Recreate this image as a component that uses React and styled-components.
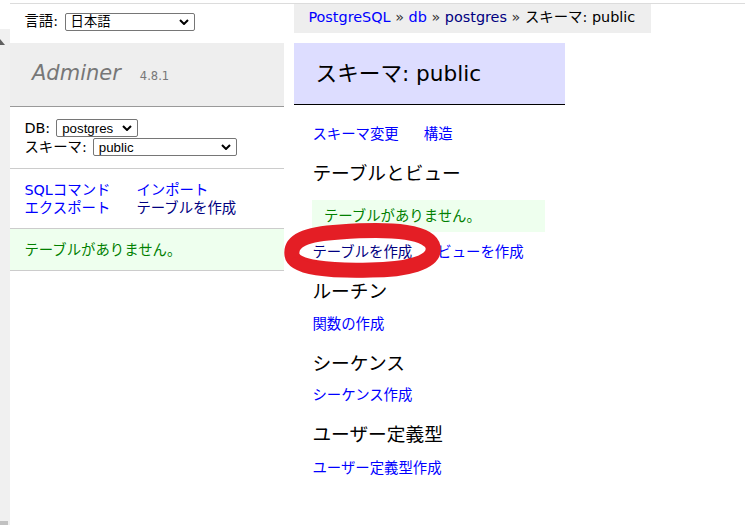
import React from 'react'
import styled, { createGlobalStyle } from 'styled-components'

const Global = createGlobalStyle`
    html, body {
        margin: 0;
        padding: 0;
        background: #fff;
    }
    body {
        font-family: 'DejaVu Sans', 'Noto Sans CJK JP', sans-serif;
        font-size: 14.4px;
        line-height: 18px;
        color: #000;
    }
`

const Shell = styled.div`
    display: flex;
    min-height: 100vh;
`

const Gutter = styled.div`
    width: 10px;
    flex: none;
    display: flex;
    flex-direction: column;
    padding-top: 29px;
`

const Track = styled.div`
    flex: 1;
    background: #f0f0f0;
    display: flex;
    flex-direction: column;
    justify-content: space-between;
    padding-top: 10px;
`

const Thumb = styled.div`
    width: 8px;
    height: 4px;
    background: #c1c1c1;
`

const Page = styled.div`
    flex: 1;
    position: relative;
    margin-top: 3px;
    border-top: 1px solid #dcdcdc;
    display: grid;
    grid-template-columns: 274px 271px;
    grid-template-rows: 29px auto;
    column-gap: 10px;
    row-gap: 10px;
    align-content: start;
`

const Lang = styled.div`
    padding: 4px 14.4px 0;
    line-height: 26px;
    white-space: nowrap;
`

const Breadcrumb = styled.p`
    margin: 0;
    justify-self: start;
    white-space: nowrap;
    background: #eee;
    height: 29px;
    line-height: 27px;
    padding: 0 16px 0 14.4px;
`

const Sep = styled.span`
    color: #333;
`

const Menu = styled.div`
    display: flex;
    flex-direction: column;
`

const Logo = styled.h1`
    margin: 0;
    background: #eee;
    border-bottom: 1px solid #999;
    padding: 16.5px 14px 16.5px 22px;
    font-size: 21px;
    line-height: 27px;
    font-weight: normal;
    color: #777;
`

const LogoName = styled.span`
    font-style: italic;
`

const Version = styled.span`
    font-size: 11.5px;
    margin-left: 19px;
`

const MenuBlock = styled.div`
    padding: 11.5px 14.4px;
    border-bottom: 1px solid #ccc;
    background: ${p => (p.$message ? '#efe' : 'transparent')};
    color: ${p => (p.$message ? 'green' : '#000')};
`

const FieldRow = styled.div`
    height: 19px;
    display: flex;
    align-items: center;
    white-space: nowrap;
    gap: 5px;
`

const MenuLinks = styled.div`
    display: grid;
    grid-template-columns: 112px auto;
`

const Link = styled.a`
    color: ${p => (p.$visited ? 'navy' : 'blue')};
    text-decoration: none;
    white-space: nowrap;
    cursor: pointer;
`

const SelectWrap = styled.span`
    position: relative;
    display: inline-flex;
    margin-left: ${p => p.$shift || 0}px;
`

const Select = styled.select`
    appearance: none;
    width: ${p => p.$w}px;
    height: 18px;
    margin: 0;
    border: 1px solid #767676;
    border-radius: 2px;
    background: #fff;
    color: #000;
    font-family: 'Liberation Sans', 'Noto Sans CJK JP', sans-serif;
    font-size: 13.3px;
    padding: 0 20px 0 5px;
`

const Chevron = styled.svg`
    position: absolute;
    right: 6px;
    top: 50%;
    margin-top: -3px;
    pointer-events: none;
`

const Content = styled.div`
    display: flex;
    flex-direction: column;
`

const Title = styled.h2`
    margin: 0;
    background: #ddf;
    border-bottom: 1px solid #000;
    padding: 17px 21.6px;
    font-size: 21.6px;
    line-height: 27px;
    font-weight: normal;
`

const Body = styled.div`
    padding-left: 18.4px;
`

const Links = styled.p`
    margin: ${p => p.$top}px 0 0;
    display: flex;
    gap: 25px;
    line-height: 18px;
`

const Heading = styled.h3`
    margin: ${p => p.$top || 19}px 0 0;
    font-size: 18.7px;
    line-height: 23px;
    font-weight: normal;
`

const Message = styled.div`
    margin: 15.5px 20px 0 0;
    padding: 7px 11.5px;
    background: #efe;
    color: green;
`

const Scribble = styled.svg`
    position: absolute;
    left: 270px;
    top: 216px;
    pointer-events: none;
`

function Dropdown({ width, value, shift }) {
    return (
        <SelectWrap $shift={shift}>
            <Select $w={width} defaultValue={value}>
                <option>{value}</option>
            </Select>
            <Chevron width="10" height="6" viewBox="0 0 10 6">
                <path d="M1 1 L5 5 L9 1" fill="none" stroke="#000" strokeWidth="2" />
            </Chevron>
        </SelectWrap>
    )
}

export default function App() {
    return (
        <Shell>
            <Global />
            <Gutter>
                <Track>
                    <svg width="5" height="6" viewBox="0 0 5 6">
                        <polygon points="0,0 5,6 0,6" fill="#606060" />
                    </svg>
                    <Thumb />
                </Track>
            </Gutter>
            <Page>
                <Lang>
                    言語: <Dropdown width={130} value="日本語" shift={2} />
                </Lang>
                <Breadcrumb>
                    <Link>PostgreSQL</Link> <Sep>»</Sep> <Link>db</Link> <Sep>»</Sep>{' '}
                    <Link $visited>postgres</Link> <Sep>»</Sep> スキーマ: public
                </Breadcrumb>

                <Menu>
                    <Logo>
                        <LogoName>Adminer</LogoName>
                        <Version>4.8.1</Version>
                    </Logo>
                    <MenuBlock>
                        <FieldRow>
                            DB: <Dropdown width={82} value="postgres" shift={1} />
                        </FieldRow>
                        <FieldRow>
                            スキーマ: <Dropdown width={144} value="public" shift={1} />
                        </FieldRow>
                    </MenuBlock>
                    <MenuBlock>
                        <MenuLinks>
                            <Link>SQLコマンド</Link>
                            <Link>インポート</Link>
                            <Link>エクスポート</Link>
                            <Link $visited>テーブルを作成</Link>
                        </MenuLinks>
                    </MenuBlock>
                    <MenuBlock $message>テーブルがありません。</MenuBlock>
                </Menu>

                <Content>
                    <Title>スキーマ: public</Title>
                    <Body>
                        <Links $top={20}>
                            <Link>スキーマ変更</Link>
                            <Link>構造</Link>
                        </Links>
                        <Heading $top={18.5}>テーブルとビュー</Heading>
                        <Message>テーブルがありません。</Message>
                        <Links $top={11}>
                            <Link $visited>テーブルを作成</Link>
                            <Link>ビューを作成</Link>
                        </Links>
                        <Heading>ルーチン</Heading>
                        <Links $top={11.5}>
                            <Link>関数の作成</Link>
                        </Links>
                        <Heading>シーケンス</Heading>
                        <Links $top={11.5}>
                            <Link>シーケンス作成</Link>
                        </Links>
                        <Heading>ユーザー定義型</Heading>
                        <Links $top={12.5}>
                            <Link>ユーザー定義型作成</Link>
                        </Links>
                    </Body>
                </Content>

                <Scribble width="180" height="70" viewBox="280 220 180 70">
                    <path
                        d="M340 232 C395 228 430 232 433 247 C436 263 405 270 370 270 C330 271 294 268 292 255 C290 241 305 234 340 232 Z"
                        fill="none"
                        stroke="#e41e25"
                        strokeWidth="15"
                        strokeLinejoin="round"
                    />
                    <path
                        d="M296 262 C312 271 350 274 388 271"
                        fill="none"
                        stroke="#e41e25"
                        strokeWidth="10"
                        strokeLinecap="round"
                    />
                </Scribble>
            </Page>
        </Shell>
    )
}
